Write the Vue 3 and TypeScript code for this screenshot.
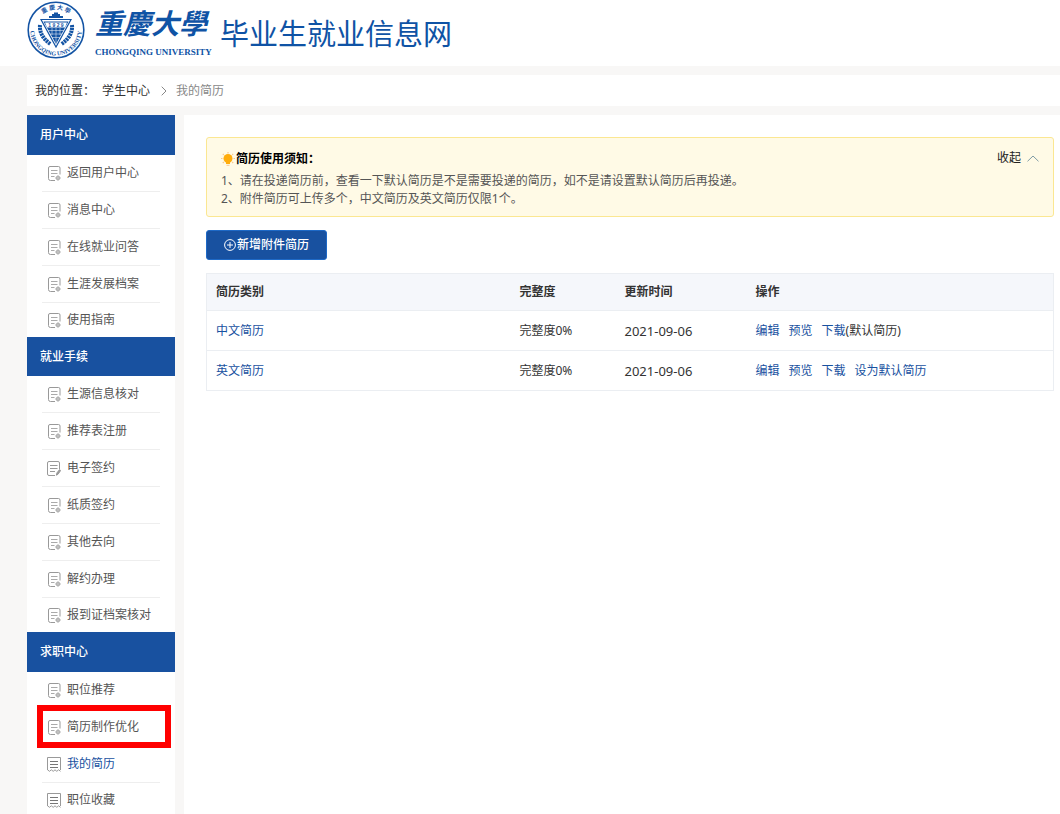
<script setup lang="ts">
import { ref } from 'vue'

type IconKind = 'note' | 'sign' | 'receipt'

interface MenuItem {
  label: string
  icon: IconKind
  active?: boolean
  marked?: boolean
}

interface MenuGroup {
  title: string
  items: MenuItem[]
}

interface Resume {
  name: string
  progress: string
  updated: string
  isDefault: boolean
}

const note = (label: string): MenuItem => ({ label, icon: 'note' })

const groups: MenuGroup[] = [
  {
    title: '用户中心',
    items: ['返回用户中心', '消息中心', '在线就业问答', '生涯发展档案', '使用指南'].map(note),
  },
  {
    title: '就业手续',
    items: [
      note('生源信息核对'),
      note('推荐表注册'),
      { label: '电子签约', icon: 'sign' },
      note('纸质签约'),
      note('其他去向'),
      note('解约办理'),
      note('报到证档案核对'),
    ],
  },
  {
    title: '求职中心',
    items: [
      note('职位推荐'),
      { label: '简历制作优化', icon: 'note', marked: true },
      { label: '我的简历', icon: 'receipt', active: true },
      { label: '职位收藏', icon: 'receipt' },
    ],
  },
]

const resumes: Resume[] = [
  { name: '中文简历', progress: '完整度0%', updated: '2021-09-06', isDefault: true },
  { name: '英文简历', progress: '完整度0%', updated: '2021-09-06', isDefault: false },
]

const open = ref(true)
</script>

<template>
  <div class="page">
    <header class="header">
      <svg class="seal" viewBox="0 0 58 58" aria-hidden="true">
        <defs>
          <path id="ring-bottom" d="M6 17 A25.800 25.800 0 1 0 52 17" />
          <path id="ring-top" d="M9 22 A21.500 21.500 0 0 1 49 22" />
        </defs>
        <circle cx="29" cy="29" r="27.8" fill="#fff" stroke="#1454a4" stroke-width="1.6" />
        <text class="ring"><textPath href="#ring-bottom" startOffset="50%" text-anchor="middle">CHONGQING UNIVERSITY</textPath></text>
        <text class="ring-cn"><textPath href="#ring-top" startOffset="50%" text-anchor="middle">重 慶 大 學</textPath></text>
        <path d="M22 17 v-2 h3 v-2 h2 v-1.500 h4 v1.500 h2 v2 h3 v2z" fill="#1454a4" />
        <path d="M14 18.500 H44 L29 46z" fill="#fff" stroke="#1454a4" stroke-width="1.200" />
        <path d="M16.500 20.500 H41.500 L29 43z" fill="#1454a4" />
        <path d="M18 21.500 H40 L38 26.500 H20z" fill="#fff" />
        <text x="29" y="26" class="year">1 9 2 9</text>
        <path d="M21 29.500 H37 M23 33 H35 M25 36.500 H33 M25 27 V34 M29 27 V42 M33 27 V34" stroke="#fff" stroke-width="0.500" />
        <path d="M13 24 q-1 11 10.500 19 M45 24 q1 11 -10.500 19" fill="none" stroke="#1454a4" stroke-width="4" stroke-dasharray="2.200 0.700" />
      </svg>
      <div class="school">
        <span class="school-cn">重慶大學</span>
        <span class="school-en">CHONGQING UNIVERSITY</span>
      </div>
      <h1 class="site">毕业生就业信息网</h1>
    </header>

    <nav class="crumbs" aria-label="我的位置">
      <span>我的位置：</span>
      <a href="#" class="crumb-link">学生中心</a>
      <svg class="crumb-arrow" viewBox="0 0 6 10" aria-hidden="true"><path d="M0.700 0.700 L5 5 L0.700 9.300" /></svg>
      <span class="crumb-here">我的简历</span>
    </nav>

    <div class="body">
      <aside class="side">
        <section v-for="g in groups" :key="g.title" class="group">
          <h2 class="side-title">{{ g.title }}</h2>
          <ul class="menu">
            <li v-for="m in g.items" :key="m.label" :class="{ marked: m.marked }">
              <a href="#" :class="{ active: m.active }">
                <svg v-if="m.icon === 'note'" class="icon" viewBox="0 0 14 16" aria-hidden="true">
                  <path d="M8 15.500 H3.500 Q1.500 15.500 1.500 13.500 V3 Q1.500 1.500 3 1.500 H11.500 Q13 1.500 13 3 V9.500" />
                  <path class="soft" d="M4 5.500 H10.500 M4 8.500 H10.500 M4 11.500 H7.500" />
                  <circle class="soft" cx="11" cy="13" r="1.900" />
                  <path class="soft" d="M11 10.500 V15.500 M8.500 13 H13.500" />
                </svg>
                <svg v-else-if="m.icon === 'sign'" class="icon" viewBox="0 0 14 16" aria-hidden="true">
                  <path d="M8 15.500 H2 Q0.500 15.500 0.500 14 V3 Q0.500 1.500 2 1.500 H11 Q12.500 1.500 12.500 3 V9" />
                  <path d="M3 5.500 H10.500 M3 8.500 H10.500 M3 11.500 H8" />
                  <path d="M9.300 15.200 L10 12.800 L12.600 9.500 L13.600 10.600 L11 14.300z" fill="#999" />
                </svg>
                <svg v-else class="icon" viewBox="0 0 14 16" aria-hidden="true">
                  <path d="M0.500 14 V1.500 H13.500 V14" />
                  <path d="M3 5.500 H11 M3 8.500 H11 M3 11.500 H11" class="dark" />
                  <path d="M0.500 13.800 L2.500 15.300 L4.300 13.800 L6.200 15.300 L8 13.800 L9.800 15.300 L11.600 13.800 L13.500 15.300" />
                </svg>
                <span>{{ m.label }}</span>
              </a>
            </li>
          </ul>
        </section>
      </aside>

      <main class="main">
        <section class="notice">
          <div class="notice-head">
            <svg class="bulb" viewBox="0 0 14 14" aria-hidden="true">
              <path d="M7 0 V1.500 M0 6.500 H1.500 M12.500 6.500 H14 M1.800 1.800 L2.800 2.800 M12.200 1.800 L11.200 2.800 M1.800 11 L2.800 10 M12.200 11 L11.200 10" stroke="#f9c78a" stroke-width="1.200" />
              <circle cx="7" cy="6.500" r="4.500" fill="#ffad0d" />
              <path d="M5 10 H9 V12 H5z" fill="#ffad0d" />
              <path d="M5.500 13.300 H8.500" stroke="#f9c78a" />
            </svg>
            <strong>简历使用须知：</strong>
            <button type="button" class="toggle" :aria-expanded="open" @click="open = !open">
              收起
              <svg viewBox="0 0 12 7" aria-hidden="true"><path d="M0.500 6.300 L6 1 L11.500 6.300" /></svg>
            </button>
          </div>
          <div v-show="open" class="notice-text">
            <p>1、请在投递简历前，查看一下默认简历是不是需要投递的简历，如不是请设置默认简历后再投递。</p>
            <p>2、附件简历可上传多个，中文简历及英文简历仅限1个。</p>
          </div>
        </section>

        <button type="button" class="add">
          <svg viewBox="0 0 12 12" aria-hidden="true"><circle cx="6" cy="6" r="5.400" /><path d="M6 3 V9 M3 6 H9" /></svg>
          <span>新增附件简历</span>
        </button>

        <table class="list">
          <colgroup>
            <col class="c-name" /><col class="c-progress" /><col class="c-date" /><col />
          </colgroup>
          <thead>
            <tr><th scope="col">简历类别</th><th scope="col">完整度</th><th scope="col">更新时间</th><th scope="col">操作</th></tr>
          </thead>
          <tbody>
            <tr v-for="r in resumes" :key="r.name">
              <td><a href="#">{{ r.name }}</a></td>
              <td>{{ r.progress }}</td>
              <td class="date">{{ r.updated }}</td>
              <td>
                <div class="ops">
                  <a href="#">编辑</a>
                  <a href="#">预览</a>
                  <span v-if="r.isDefault"><a href="#">下载</a>(默认简历)</span>
                  <template v-else>
                    <a href="#">下载</a>
                    <a href="#">设为默认简历</a>
                  </template>
                </div>
              </td>
            </tr>
          </tbody>
        </table>
      </main>
    </div>
  </div>
</template>

<style>
html {
  scrollbar-width: none;
}
body {
  margin: 0;
  background: #f8f7f6;
}
</style>

<style scoped>
.page {
  min-height: 100vh;
  display: flex;
  flex-direction: column;
  background: #f8f7f6;
  color: #333;
  font-family: "Noto Sans", "Noto Sans CJK SC", sans-serif;
  font-size: 12px;
  line-height: 18px;
}
a {
  color: #1851a0;
  text-decoration: none;
}
button {
  font: inherit;
  cursor: pointer;
}
.header {
  display: flex;
  align-items: flex-start;
  height: 66px;
  padding-left: 27px;
  background: #fff;
  color: #0f53a5;
}
.seal {
  width: 58px;
  height: 58px;
  margin-top: 1px;
  overflow: visible;
}
.ring {
  font: bold 6px "Liberation Serif", serif;
  fill: #1454a4;
}
.ring-cn {
  font: bold 6px "Noto Sans CJK TC", sans-serif;
  fill: #1454a4;
}
.year {
  font: bold 5px "Liberation Sans", sans-serif;
  fill: #1454a4;
  text-anchor: middle;
}
.school {
  display: flex;
  flex-direction: column;
  width: 116px;
  margin-left: 10px;
  white-space: nowrap;
}
.school-cn {
  height: 44px;
  font: italic bold 28px/44px "Noto Sans CJK TC", sans-serif;
}
.school-en {
  font: bold 9px/16px "Liberation Serif", serif;
}
.site {
  margin: 0 0 0 9px;
  font: 400 29px/64px "Noto Sans CJK SC", sans-serif;
}
.crumbs {
  display: flex;
  align-items: center;
  height: 31px;
  margin: 9px 0 9px 27px;
  padding-left: 8px;
  background: #fff;
}
.crumb-link {
  margin-left: 7px;
  color: #333;
}
.crumb-arrow {
  width: 6px;
  height: 10px;
  margin: 0 9px 0 11px;
  fill: none;
  stroke: #888;
}
.crumb-here {
  color: #888;
}
.body {
  flex: 1;
  display: flex;
  gap: 9px;
  padding-left: 27px;
}
.side {
  flex: none;
  width: 148px;
  background: #fff;
}
.side-title {
  margin: 0;
  padding-left: 13px;
  background: #1851a0;
  color: #fff;
  font-size: 12px;
  font-weight: 500;
  line-height: 40px;
}
.group:nth-child(2) .side-title {
  line-height: 39px;
}
.menu {
  margin: 0 15px;
  padding: 0;
  list-style: none;
}
.menu li {
  position: relative;
  border-bottom: 1px solid #eee;
}
.menu li:last-child {
  border-bottom: 0;
}
.menu a {
  display: flex;
  align-items: center;
  gap: 6px;
  height: 36px;
  padding-left: 5px;
  color: #555;
  white-space: nowrap;
}
.menu li:last-child a {
  height: 34px;
}
.menu a.active {
  color: #1851a0;
}
.marked::after {
  content: "";
  position: absolute;
  inset: -4px -11px -3px -5px;
  z-index: 1;
  border: 6px solid #f00;
  pointer-events: none;
}
.icon {
  flex: none;
  width: 14px;
  height: 16px;
  fill: none;
  stroke: #999;
}
.icon .soft {
  stroke: #aaa;
}
.icon .dark {
  stroke: #777;
}
.main {
  flex: 1;
  min-width: 0;
  padding: 22px 6px 22px 22px;
  background: #fff;
}
.notice {
  padding: 11px 14px 8px;
  border: 1px solid #fbe792;
  border-radius: 3px;
  background: #fffae6;
}
.notice-head {
  display: flex;
  align-items: center;
  margin-bottom: 3px;
  color: #000;
}
.bulb {
  width: 14px;
  height: 14px;
  margin-right: 1px;
}
.toggle {
  display: flex;
  align-items: center;
  gap: 6px;
  margin: 0 0 2px auto;
  padding: 0;
  border: 0;
  background: none;
  color: #222;
}
.toggle svg {
  width: 12px;
  height: 7px;
  fill: none;
  stroke: #7f9ba5;
}
.notice-text {
  color: #555;
}
.notice p {
  margin: 0;
}
.add {
  display: flex;
  align-items: center;
  justify-content: center;
  gap: 1px;
  height: 30px;
  margin: 13px 0;
  padding: 0 17px;
  border: 1px solid #1e69c6;
  border-radius: 3px;
  background: #1851a0;
  color: #fff;
  font-weight: 500;
}
.add svg {
  width: 12px;
  height: 12px;
  fill: none;
  stroke: #fff;
}
.list {
  width: 100%;
  table-layout: fixed;
  border-collapse: collapse;
  border: 1px solid #ebeef2;
}
.c-name {
  width: 304px;
}
.c-progress {
  width: 105px;
}
.c-date {
  width: 131px;
}
.list tr {
  border-bottom: 1px solid #ebeef2;
}
.list th,
.list td {
  padding: 0 9px;
  text-align: left;
}
.list th {
  height: 36px;
  background: #f5f7fb;
  font-weight: 600;
}
.list td {
  height: 39px;
}
.date {
  font-size: 13px;
}
.ops {
  display: flex;
  gap: 9px;
}
</style>
